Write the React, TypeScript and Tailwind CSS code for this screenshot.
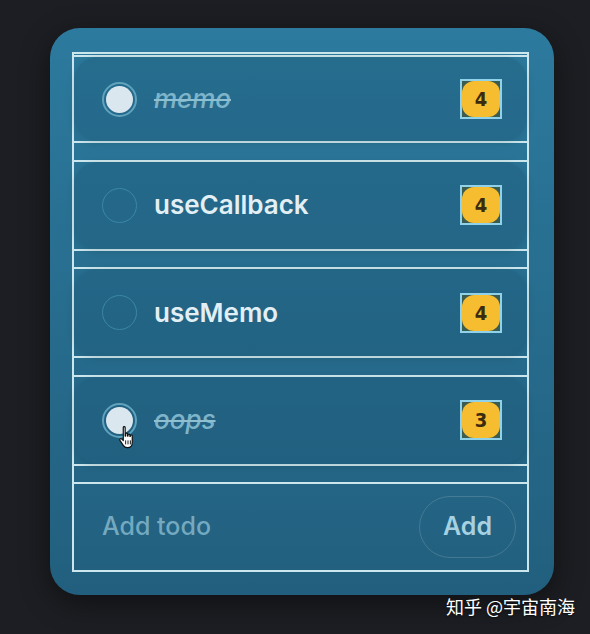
import React from 'react';

interface Todo {
  text: string;
  done: boolean;
  count: number;
}

const todos: Todo[] = [
  { text: 'memo', done: true, count: 4 },
  { text: 'useCallback', done: false, count: 4 },
  { text: 'useMemo', done: false, count: 4 },
  { text: 'oops', done: true, count: 3 },
];

const font = { fontFamily: 'Inter, "Noto Sans", sans-serif' };

const Radio: React.FC<{ checked: boolean }> = ({ checked }) =>
  checked ? (
    <div className="w-[35px] h-[35px] shrink-0 rounded-full border-2 border-[#5fa3bd] p-[2px]">
      <div className="w-full h-full rounded-full bg-[#dbe7ee]"></div>
    </div>
  ) : (
    <div className="w-[35px] h-[35px] shrink-0 rounded-full border-[1.5px] border-[#3b87a5]"></div>
  );

const Badge: React.FC<{ count: number }> = ({ count }) => (
  <div className="w-[42px] h-[40px] border-2 border-[#8fd2ea] bg-[#3d5c50] flex">
    <div className="flex-1 rounded-[12px] bg-[#f5bd2f] flex items-center justify-center">
      <span
        className="text-[20px] font-bold text-[#3a2a10] leading-none"
        style={{ fontFamily: '"DejaVu Sans Condensed", "DejaVu Sans", sans-serif' }}
      >
        {count}
      </span>
    </div>
  </div>
);

const Cursor = () => (
  <svg className="absolute left-[117px] top-[425px]" width="22" height="26" viewBox="0 0 18 22">
    <path
      d="M5 2.2c0-1 1.6-1 1.6 0v7.2h.4V7.6c0-1 1.6-1 1.6 0v1.8h.4V8.4c0-1 1.6-1 1.6 0v1.2h.4v-.4c0-1 1.6-1 1.6 0v5.6c0 2.6-1.6 4.4-4 4.4H8.2c-1.4 0-2.4-.8-3.2-2L2.2 13c-.6-1 .6-2 1.4-1.2L5 13.2z"
      fill="#fff"
      stroke="#111"
      strokeWidth="1"
      strokeLinejoin="round"
    />
    <path d="M7 13v3.4M9 13v3.4M11 13v3.4" stroke="#111" strokeWidth="0.8" />
  </svg>
);

const Strip = () => <div className="h-[18.5px] border-b-2 border-[#cbe6ec]"></div>;

export default function App() {
  return (
    <div className="relative min-h-screen w-full bg-[#1d1e23] pt-[28px]" style={font}>
      <div className="ml-[50px] w-[504px] rounded-[30px] bg-gradient-to-b from-[#2c7a9e] to-[#225f7e] pt-[24px] pb-[23px] pl-[22px] pr-[25px] shadow-[0_8px_30px_rgba(0,0,0,0.45)]">
        <div className="border-2 border-[#cbe6ec] flex flex-col">
          {todos.map((t, i) => (
            <React.Fragment key={t.text}>
              <div
                className={`border-b-2 border-[#cbe6ec] ${i === 0 ? 'border-t-2 mt-px h-[88px]' : 'h-[89px]'}`}
              >
                <div className="h-full rounded-[24px] bg-[#1f5b79]/40 shadow-[0_2px_8px_rgba(0,0,0,0.12)] flex items-center pl-[28px] pr-[25px] gap-[17px]">
                  <Radio checked={t.done} />
                  <span
                    className={`flex-1 text-[26px] leading-none ${
                      t.done
                        ? 'italic line-through font-medium text-[#7db4c9] decoration-[#8fc0d2] decoration-[1.5px]'
                        : 'font-semibold text-[#e2eff5]'
                    }`}
                  >
                    {t.text}
                  </span>
                  <Badge count={t.count} />
                </div>
              </div>
              <Strip />
            </React.Fragment>
          ))}
          <div className="h-[86px] flex items-center pl-[28px] pr-[11px]">
            <span className="flex-1 text-[25px] font-medium text-[#74a9c0]">Add todo</span>
            <button className="w-[97px] h-[62px] rounded-full border border-white/15 text-[25px] font-semibold text-[#a7d1e1]">
              Add
            </button>
          </div>
        </div>
      </div>
      <div
        className="-mt-[2px] pr-[15px] text-right text-[18px] text-white"
        style={{ fontFamily: '"Noto Sans CJK SC", "Noto Sans", sans-serif', textShadow: '0 1px 2px rgba(0,0,0,0.6)' }}
      >
        知乎 @宇宙南海
      </div>
      <Cursor />
    </div>
  );
}
